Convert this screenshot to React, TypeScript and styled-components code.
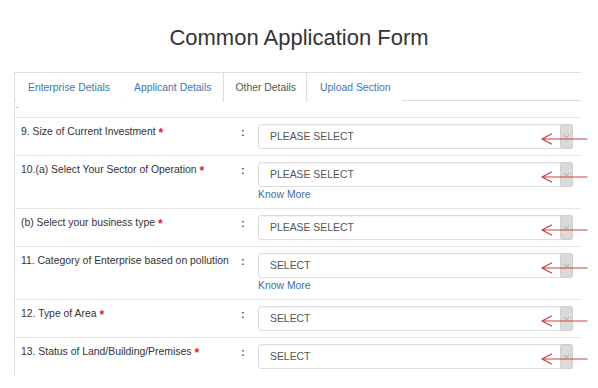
import React from "react";
import styled, { createGlobalStyle } from "styled-components";

const Global = createGlobalStyle`
  html, body { margin: 0; padding: 0; background: #fff; }
  body { font-family: "Liberation Sans", Arial, sans-serif; color: #333; }
`;

const Page = styled.div`
  width: 598px;
  height: 388px;
  overflow: hidden;
  padding-top: 25px;
  box-sizing: border-box;
`;

const Title = styled.h1`
  margin: 0 0 21px;
  font-size: 22px;
  line-height: 26px;
  font-weight: normal;
  text-align: center;
  color: #333;
`;

const Panel = styled.div`
  margin-left: 14px;
  width: 566px;
  border-left: 1px solid #ddd;
  border-top: 1px solid #ddd;
`;

const TabBar = styled.ul`
  display: flex;
  list-style: none;
  margin: 0;
  padding: 0 0 0 1px;
  height: 27px;
  border-bottom: 1px solid #ddd;
`;

const Tab = styled.li<{ $active?: boolean }>`
  display: flex;
  align-items: center;
  padding: 0 10px 0 11px;
  margin-right: 1px;
  font-size: 10.4px;
  color: ${(p) => (p.$active ? "#555" : "#3b78b3")};
  background: #fff;
  border-left: 1px solid ${(p) => (p.$active ? "#ddd" : "transparent")};
  border-right: 1px solid ${(p) => (p.$active ? "#ddd" : "transparent")};
  height: 28px;
  box-sizing: border-box;
`;

const Dot = styled.div`
  height: 16px;
  padding-left: 1px;
  font-size: 9px;
  line-height: 9px;
  color: #555;
`;

const Row = styled.div`
  display: grid;
  grid-template-columns: 220px 17px 315px;
  padding: 6px 0 6px 6px;
  border-top: 1px solid #e6e6e6;
`;

const Label = styled.div`
  font-size: 10.4px;
  line-height: 16px;
  color: #333;
`;

const Star = styled.span`
  color: #e0221c;
  font-weight: bold;
  font-size: 12px;
  margin-left: 3px;
  vertical-align: -2px;
`;

const Colon = styled.div`
  font-size: 11px;
  line-height: 16px;
  font-weight: bold;
  color: #555;
`;

const Field = styled.div`
  display: flex;
  flex-direction: column;
`;

const SelectBox = styled.div`
  position: relative;
  height: 25px;
  box-sizing: border-box;
  border: 1px solid #dcdcdc;
  border-radius: 3px;
  display: flex;
  align-items: center;
  padding-left: 11px;
  font-size: 10.4px;
  color: #555;
  box-shadow: inset 0 1px 1px rgba(0, 0, 0, 0.04);
`;

const SelectButton = styled.div`
  position: absolute;
  right: -1px;
  top: -1px;
  bottom: -1px;
  width: 13px;
  background: #dadada;
  border: 1px solid #cfcfcf;
  border-radius: 3px;
  box-sizing: border-box;
  display: flex;
  align-items: center;
  justify-content: center;
`;

const Arrow = styled.svg`
  position: absolute;
  left: 282px;
  top: 8px;
  overflow: visible;
`;

const KnowMore = styled.div`
  font-size: 10.4px;
  line-height: 15px;
  color: #3b6fa8;
`;

type Item = { label: string; required: boolean; value: string; more?: boolean };

const items: Item[] = [
  { label: "9. Size of Current Investment", required: true, value: "PLEASE SELECT" },
  { label: "10.(a) Select Your Sector of Operation", required: true, value: "PLEASE SELECT", more: true },
  { label: "(b) Select your business type", required: true, value: "PLEASE SELECT" },
  { label: "11. Category of Enterprise based on pollution", required: false, value: "SELECT", more: true },
  { label: "12. Type of Area", required: true, value: "SELECT" },
  { label: "13. Status of Land/Building/Premises", required: true, value: "SELECT" },
];

const tabs = ["Enterprise Detials", "Applicant Details", "Other Details", "Upload Section"];

export default function App() {
  return (
    <Page>
      <Global />
      <Title>Common Application Form</Title>
      <Panel>
        <TabBar>
          {tabs.map((t) => (
            <Tab key={t} $active={t === "Other Details"}>
              {t}
            </Tab>
          ))}
        </TabBar>
        <Dot>.</Dot>
        {items.map((it) => (
          <Row key={it.label}>
            <Label>
              {it.label}
              {it.required && <Star>*</Star>}
            </Label>
            <Colon>:</Colon>
            <Field>
              <SelectBox>
                {it.value}
                <SelectButton>
                  <svg width="7" height="5" viewBox="0 0 7 5">
                    <path d="M1 1.2 L3.5 3.6 L6 1.2" fill="none" stroke="#9a9a9a" strokeWidth="0.9" />
                  </svg>
                </SelectButton>
                <Arrow width="47" height="12" viewBox="0 0 47 12">
                  <path
                    d="M1 6 H46 M1 6 L10.5 1 M1 6 L10.5 11"
                    fill="none"
                    stroke="#c8423c"
                    strokeWidth="1.2"
                    strokeLinecap="round"
                  />
                </Arrow>
              </SelectBox>
              {it.more && <KnowMore>Know More</KnowMore>}
            </Field>
          </Row>
        ))}
      </Panel>
    </Page>
  );
}
